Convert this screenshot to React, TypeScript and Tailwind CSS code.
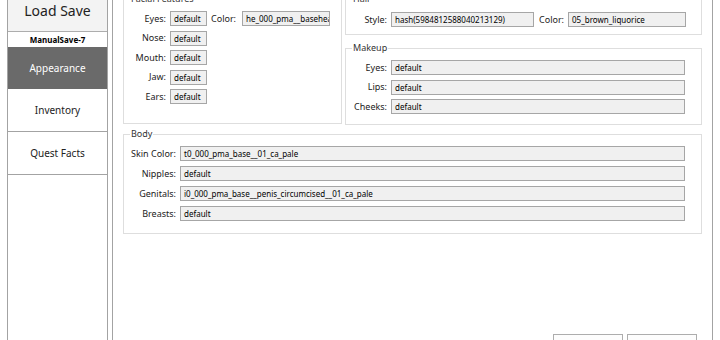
import React from "react";

const font = { fontFamily: '"Noto Sans", "Open Sans", "DejaVu Sans", sans-serif' };

function Field({ w, children }: { w: string; children: React.ReactNode }) {
  return (
    <div
      className={`${w} h-[15px] shrink-0 border border-[#a6a6a6] bg-[#f0f0f0] px-[3px] text-[8px] leading-[13px] text-black overflow-hidden whitespace-nowrap`}
    >
      {children}
    </div>
  );
}

function Group({
  title,
  className,
  children,
}: {
  title: string;
  className: string;
  children?: React.ReactNode;
}) {
  return (
    <div className={`relative border border-[#dedede] bg-white ${className}`}>
      <span className="absolute left-[6px] top-[-7px] bg-white px-[1px] text-[9px] leading-[12px] text-[#333]">
        {title}
      </span>
      {children}
    </div>
  );
}

function Row({
  label,
  labelW,
  children,
}: {
  label: string;
  labelW: string;
  children: React.ReactNode;
}) {
  return (
    <div className="flex items-center h-[15px]">
      <div className={`${labelW} shrink-0 text-right text-[9px] leading-[12px] text-[#222] pr-[4px]`}>
        {label}
      </div>
      {children}
    </div>
  );
}

export default function App() {
  return (
    <div className="w-[720px] h-[340px] overflow-hidden bg-white flex" style={font}>
      {/* Sidebar */}
      <div className="ml-[7px] w-[101px] h-[350px] -mt-[10px] shrink-0 flex flex-col border-l border-r border-[#a3a3a3]">
        <div className="h-[42px] shrink-0 border-b border-[#adadad] bg-[#f3f3f3] flex items-center justify-center text-[14px] text-[#222]">
          Load Save
        </div>
        <div className="h-[15px] shrink-0 flex items-center justify-center text-[8px] font-bold text-black">
          ManualSave-7
        </div>
        <div className="h-[42px] shrink-0 bg-[#6a6a6a] flex items-center justify-center text-[10px] text-white">
          Appearance
        </div>
        <div className="h-[43px] shrink-0 border-b border-[#a3a3a3] flex items-center justify-center text-[10px] text-[#222]">
          Inventory
        </div>
        <div className="h-[43px] shrink-0 border-b border-[#a3a3a3] flex items-center justify-center text-[10px] text-[#222]">
          Quest Facts
        </div>
      </div>

      {/* Main panel */}
      <div className="ml-[4px] w-[601px] h-[360px] shrink-0 border-l border-r border-[#a3a3a3] flex flex-col">
        <div className="pl-[10px] -mt-[1px] flex flex-col">
          <div className="flex gap-[3px]">
            <Group title="Facial Features" className="w-[219px] h-[125px] pt-[11px]">
              <div className="flex flex-col gap-[4.5px]">
                <Row label="Eyes:" labelW="w-[46px]">
                  <Field w="w-[37px]">default</Field>
                  <span className="ml-[4px] text-[9px] text-[#222]">Color:</span>
                  <div className="ml-[6px]">
                    <Field w="w-[88px]">he_000_pma__basehead</Field>
                  </div>
                </Row>
                <Row label="Nose:" labelW="w-[46px]">
                  <Field w="w-[37px]">default</Field>
                </Row>
                <Row label="Mouth:" labelW="w-[46px]">
                  <Field w="w-[37px]">default</Field>
                </Row>
                <Row label="Jaw:" labelW="w-[46px]">
                  <Field w="w-[37px]">default</Field>
                </Row>
                <Row label="Ears:" labelW="w-[46px]">
                  <Field w="w-[37px]">default</Field>
                </Row>
              </div>
            </Group>
            <div className="flex flex-col">
              <Group title="Hair" className="w-[357px] h-[36px] pt-[12px]">
                <Row label="Style:" labelW="w-[45px]">
                  <Field w="w-[143px]">hash(5984812588040213129)</Field>
                  <span className="ml-[5px] text-[9px] text-[#222]">Color:</span>
                  <div className="ml-[4px]">
                    <Field w="w-[118px]">05_brown_liquorice</Field>
                  </div>
                </Row>
              </Group>
              <Group title="Makeup" className="mt-[13px] w-[357px] h-[77px] pt-[11px]">
                <div className="flex flex-col gap-[4.5px]">
                  <Row label="Eyes:" labelW="w-[45px]">
                    <Field w="w-[294px]">default</Field>
                  </Row>
                  <Row label="Lips:" labelW="w-[45px]">
                    <Field w="w-[294px]">default</Field>
                  </Row>
                  <Row label="Cheeks:" labelW="w-[45px]">
                    <Field w="w-[294px]">default</Field>
                  </Row>
                </div>
              </Group>
            </div>
          </div>

          <Group title="Body" className="mt-[9px] w-[579px] h-[100px] pt-[11px]">
            <div className="flex flex-col gap-[5px]">
              <Row label="Skin Color:" labelW="w-[56px]">
                <Field w="w-[505px]">t0_000_pma_base__01_ca_pale</Field>
              </Row>
              <Row label="Nipples:" labelW="w-[56px]">
                <Field w="w-[505px]">default</Field>
              </Row>
              <Row label="Genitals:" labelW="w-[56px]">
                <Field w="w-[505px]">i0_000_pma_base__penis_circumcised__01_ca_pale</Field>
              </Row>
              <Row label="Breasts:" labelW="w-[56px]">
                <Field w="w-[505px]">default</Field>
              </Row>
            </div>
          </Group>
        </div>

        <div className="mt-[100px] pr-[15px] flex justify-end gap-[4px]">
          <div className="w-[70px] h-[22px] border border-[#adadad] bg-[#fdfdfd]" />
          <div className="w-[70px] h-[22px] border border-[#adadad] bg-[#fdfdfd]" />
        </div>
      </div>
    </div>
  );
}
